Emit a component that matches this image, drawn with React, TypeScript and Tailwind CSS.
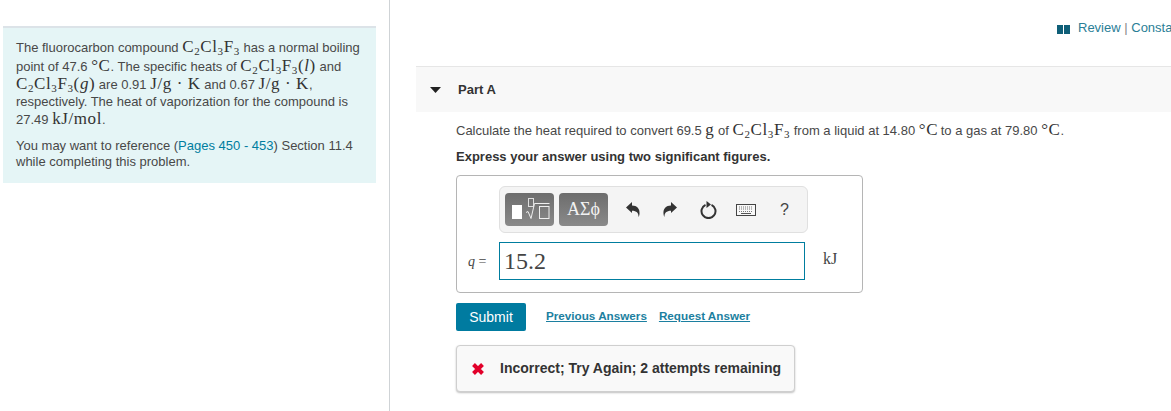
const sans = "font-['Liberation_Sans',Arial,sans-serif]";

function Sub({ children }: { children: React.ReactNode }) {
  return <span className="relative top-[3px] text-[11px] leading-none">{children}</span>;
}

function M({ children }: { children: React.ReactNode }) {
  return <span className="font-['Liberation_Serif',serif] text-[17px] leading-none tracking-[0.6px] text-[#333]">{children}</span>;
}

function Formula() {
  return (
    <M>
      C<Sub>2</Sub>Cl<Sub>3</Sub>F<Sub>3</Sub>
    </M>
  );
}

function Toolbar() {
  return (
    <div className="ml-[42px] flex h-[47px] w-[309px] items-center rounded-[6px] border border-[#e0e0e0] bg-[#f4f4f4] pl-[5px]">
      <div className="flex h-[33px] w-[49px] items-center justify-center rounded-[4px] bg-gradient-to-b from-[#6d6d6d] to-[#8a8a8a]">
        <svg width="49" height="33" viewBox="0 0 49 33" fill="none">
          <rect x="7" y="12" width="10" height="14" fill="#fff" />
          <rect x="23.500" y="5.500" width="5" height="8" stroke="#ddd" strokeWidth="1" />
          <path d="M21 19.500l2-1 3 7 3.500-15h15" stroke="#eee" strokeWidth="1" />
          <rect x="34.500" y="13.500" width="9.500" height="12" stroke="#eee" strokeWidth="1" />
        </svg>
      </div>
      <div className="ml-[5px] flex h-[33px] w-[49px] items-center justify-center rounded-[4px] bg-gradient-to-b from-[#6d6d6d] to-[#8a8a8a] font-['Liberation_Serif',serif] text-[18px] text-[#f2f2f2]">
        ΑΣϕ
      </div>
      <svg className="ml-[18px]" width="14" height="15" viewBox="0 0 14 15" fill="#333">
        <path d="M0 5.500L6 0v3.500c5 0 8 3 7.500 8.500-.1 1.200-.5 2.200-1 3 .2-4.200-2-6.300-6.500-6.300V11z" />
      </svg>
      <svg className="ml-[23px]" width="14" height="15" viewBox="0 0 14 15" fill="#333">
        <path d="M14 5.500L8 0v3.500c-5 0-8 3-7.500 8.500.1 1.200.5 2.200 1 3-.2-4.200 2-6.300 6.500-6.300V11z" />
      </svg>
      <svg className="ml-[23px]" width="17" height="18" viewBox="0 0 17 18" fill="none">
        <path d="M5.500 3.800a7 7 0 1 0 6 0" stroke="#333" strokeWidth="2" />
        <path d="M6.500 0v7l4.500-3.500z" fill="#333" />
      </svg>
      <svg className="ml-[19px]" width="20" height="12" viewBox="0 0 20 12" fill="none">
        <rect x="0.500" y="0.500" width="19" height="11" fill="#f8f8f8" stroke="#444" />
        <path d="M3 3h14M3 5h14" stroke="#777" strokeDasharray="1 1" />
        <path d="M3 7.500h14" stroke="#777" strokeDasharray="1 1" />
        <path d="M5 9.500h10" stroke="#555" />
      </svg>
      <span className={`ml-[24px] text-[16px] text-[#444] ${sans}`}>?</span>
    </div>
  );
}

export default function App() {
  return (
    <div className={`flex h-[411px] w-[1171px] overflow-hidden bg-white text-[13px] text-[#484848] ${sans}`}>
      <aside className="h-full w-[390px] shrink-0 border-r border-[#cfd3d6] pl-[3px] pt-[26px]">
        <div className="h-[157px] w-[373px] border-t-2 border-[#dce3e8] bg-[#e5f5f6] px-[13px] pt-[10px] leading-[16.5px]">
          <p className="whitespace-nowrap">
            The fluorocarbon compound <Formula /> has a normal boiling
            <br />
            point of 47.6 <M>°C</M>. The specific heats of <Formula />
            <M>(<i>l</i>)</M> and
            <br />
            <Formula />
            <M>(<i>g</i>)</M> are 0.91 <M>J/g · K</M> and 0.67 <M>J/g · K</M>,
            <br />
            respectively. The heat of vaporization for the compound is
            <br />
            27.49 <M>kJ/mol</M>.
          </p>
          <p className="mt-[9px] leading-[16px]">
            You may want to reference (<span className="text-[#007d9f]">Pages 450 - 453</span>) Section 11.4
            <br />
            while completing this problem.
          </p>
        </div>
      </aside>

      <main className="min-w-0 flex-1 pl-[26px]">
        <div className="flex h-[40px] items-end whitespace-nowrap pb-[3px] pl-[641px] text-[#2a7e96]">
          <svg className="mb-[3px] mr-[8px] shrink-0" width="13" height="9" viewBox="0 0 13 9" fill="#0f5f78">
            <path d="M0 0h6v9H0zM7 0h6v9H7z" />
          </svg>
          <span>
            Review <span className="text-[#888]">|</span> Constants
          </span>
        </div>

        <div className="mt-[26px] flex h-[46px] items-center border-t border-[#e6e6e6] bg-[#f8f8f8] pl-[14px]">
          <svg width="11" height="6" viewBox="0 0 11 6" fill="#222">
            <path d="M0 0h11L5.500 6z" />
          </svg>
          <span className="ml-[17px] pt-px font-bold text-[#333]">Part A</span>
        </div>

        <div className="pl-[40px]">
          <p className="mt-[9px] h-[18px] whitespace-nowrap leading-[18px]">
            Calculate the heat required to convert 69.5 <M>g</M> of <Formula /> from a liquid at 14.80 <span className="-mr-[1px]"><M>°C</M></span> to a gas at 79.80 <M>°C</M>.
          </p>
          <p className="mt-[8px] h-[18px] font-bold leading-[20px] text-[#333]">Express your answer using two significant figures.</p>

          <div className="mt-[10px] h-[118px] w-[407px] rounded-[4px] border border-[#b5b5b5] pt-[10px]">
            <Toolbar />
            <div className="mt-[9px] flex items-center">
              <span className="ml-[11px] w-[31px] font-['Liberation_Serif',serif] text-[14px] text-[#444]">
                <i>q</i> =
              </span>
              <div className="flex h-[38px] w-[306px] items-center border border-[#007d9f] pl-[4px] font-['Liberation_Serif',serif] text-[24px] text-[#444]">
                15.2
              </div>
              <span className="ml-[18px] -mt-[4px] font-['Liberation_Serif',serif] text-[16px] text-[#444]">kJ</span>
            </div>
          </div>

          <div className="mt-[10px] flex items-start">
            <button className="h-[28px] w-[70px] rounded-[2px] bg-[#007ba0] text-[14px] text-white">Submit</button>
            <a className="ml-[20px] mt-[4px] text-[11.7px] font-bold text-[#1c7fa0] underline">Previous Answers</a>
            <a className="ml-[12px] mt-[4px] text-[11.7px] font-bold text-[#1c7fa0] underline">Request Answer</a>
          </div>

          <div className="mt-[14px] flex h-[47px] w-[339px] items-center rounded-[4px] border border-[#cfcfcf] bg-[#f9f9f9] pl-[14px] shadow-[0_1px_2px_rgba(0,0,0,0.25)]">
            <svg width="14" height="14" viewBox="0 0 14 14">
              <path d="M2.500 2.500l9 9M11.500 2.500l-9 9" stroke="#e2002a" strokeWidth="4" />
            </svg>
            <span className="ml-[15px] whitespace-nowrap text-[14px] font-bold text-[#333]">Incorrect; Try Again; 2 attempts remaining</span>
          </div>
        </div>
      </main>
    </div>
  );
}
